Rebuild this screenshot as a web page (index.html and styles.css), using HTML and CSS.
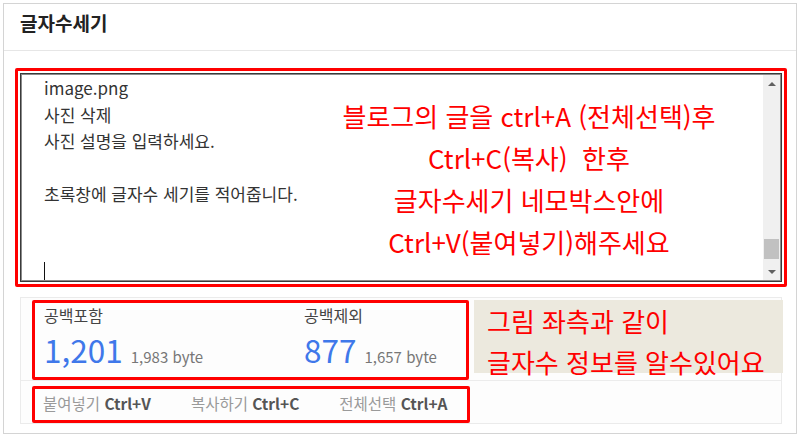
FILE: index.html
```html
<!DOCTYPE html>
<html lang="ko">
<head>
<meta charset="utf-8">
<title>글자수세기</title>
<link rel="stylesheet" href="styles.css">
</head>
<body>
<div class="panel">
  <div class="header"><h1 class="title">글자수세기</h1></div>
  <div class="content">
    <div class="editor-frame">
      <div class="editor">
        <div class="editor-text">
          <p class="line">image.png</p>
          <p class="line">사진 삭제</p>
          <p class="line">사진 설명을 입력하세요.</p>
          <p class="line">&nbsp;</p>
          <p class="line">초록창에 글자수 세기를 적어줍니다.</p>
          <span class="caret"></span>
          <div class="note note-editor">
            <p>블로그의 글을 ctrl+A (전체선택)후</p>
            <p>Ctrl+C(복사)&nbsp; 한후</p>
            <p>글자수세기 네모박스안에</p>
            <p>Ctrl+V(붙여넣기)해주세요</p>
          </div>
        </div>
        <div class="scrollbar">
          <div class="sb-btn"><span class="arrow-up"></span></div>
          <div class="sb-track"></div>
          <div class="sb-thumb"></div>
          <div class="sb-gap"></div>
          <div class="sb-btn"><span class="arrow-down"></span></div>
        </div>
      </div>
    </div>
    <div class="info">
      <div class="stats">
        <div class="stat stat-with">
          <div class="stat-label">공백포함</div>
          <div class="stat-value"><span class="count">1,201</span><span class="bytes">1,983 byte</span></div>
        </div>
        <div class="stat">
          <div class="stat-label">공백제외</div>
          <div class="stat-value"><span class="count">877</span><span class="bytes">1,657 byte</span></div>
        </div>
      </div>
      <div class="shortcuts">
        <span class="key">붙여넣기 <b>Ctrl+V</b></span>
        <span class="key">복사하기 <b>Ctrl+C</b></span>
        <span class="key">전체선택 <b>Ctrl+A</b></span>
      </div>
      <div class="mark mark-stats"></div>
      <div class="mark mark-keys"></div>
      <div class="note note-info">
        <p>그림 좌측과 같이</p>
        <p>글자수 정보를 알수있어요</p>
      </div>
    </div>
  </div>
</div>
</body>
</html>
```

FILE: styles.css
```css
* { box-sizing: border-box; }
html, body { margin: 0; padding: 0; background: #fff; }
body { font-family: "Noto Sans CJK KR", "Noto Sans", sans-serif; color: #333; }
p { margin: 0; }

.panel {
  margin: 3px;
  width: 794px;
  height: 431px;
  border: 1px solid #d4d4d4;
  background: #fff;
}

.header {
  height: 47px;
  border-bottom: 1px solid #e6e6e6;
  padding-left: 16px;
}
.title {
  margin: 0;
  font-size: 19px;
  font-weight: bold;
  line-height: 38px;
  color: #222;
}

.content { padding: 17px 9px 0 11px; }

.editor-frame {
  height: 219px;
  border: 3px solid #ff0000;
  border-radius: 2px;
  padding: 2px;
}
.editor {
  height: 100%;
  border: 1px solid #3a3a3a;
  box-shadow: inset 1px 1px 0 #8a8a8a, inset -1px -1px 0 #8a8a8a;
  padding: 1px;
  display: flex;
  background: #fff;
}
.editor-text {
  flex: 1;
  position: relative;
  padding-left: 22px;
  font-size: 17px;
  line-height: 26.5px;
  color: #333;
  overflow: hidden;
}
.caret {
  position: absolute;
  left: 22px;
  top: 187px;
  width: 1px;
  height: 19px;
  background: #111;
}

.scrollbar {
  width: 17px;
  background: #f0f0f0;
  display: flex;
  flex-direction: column;
}
.sb-btn {
  height: 17px;
  display: flex;
  align-items: center;
  justify-content: center;
}
.sb-track { flex: 1; }
.sb-thumb { height: 20px; margin: 0 1px; background: #c1c1c1; }
.sb-gap { height: 4px; }
.arrow-up, .arrow-down {
  width: 0; height: 0;
  border-left: 4px solid transparent;
  border-right: 4px solid transparent;
}
.arrow-up { border-bottom: 4px solid #606060; }
.arrow-down { border-top: 4px solid #606060; }

.note { color: #ff0000; font-size: 26px; }
.note-editor {
  position: absolute;
  left: 267px;
  top: 20px;
  width: 480px;
  text-align: center;
  line-height: 42px;
}

.info {
  position: relative;
  margin: 10px 5px 0 5px;
  height: 127px;
  border: 1px solid #ebebeb;
  background: #fdfdfd;
}
.stats {
  height: 83px;
  border-bottom: 1px solid #ececec;
  display: flex;
  padding: 7px 0 0 23px;
}
.stat-with { width: 260px; }
.stat-label {
  font-size: 16px;
  line-height: 20px;
  color: #444;
}
.stat-value {
  display: flex;
  align-items: baseline;
  margin-top: 4px;
}
.count {
  font-size: 31.5px;
  line-height: 40px;
  color: #3f78ea;
  margin-right: 8px;
}
.bytes { font-size: 15px; color: #777; }

.shortcuts {
  height: 41px;
  display: flex;
  align-items: center;
  gap: 40px;
  padding: 2px 0 0 22px;
  font-size: 15.5px;
  color: #9a9a9a;
}
.key b { font-weight: 600; color: #555; }

.mark {
  position: absolute;
  border: 3px solid #ff0000;
  border-radius: 2px;
}
.mark-stats { left: 11px; top: 2px; width: 437px; height: 80px; }
.mark-keys { left: 11px; top: 88px; width: 438px; height: 37px; }

.note-info {
  position: absolute;
  left: 453px;
  top: 2px;
  width: 309px;
  height: 73px;
  background: #ece9de;
  padding-left: 13px;
  line-height: 41px;
}
```
